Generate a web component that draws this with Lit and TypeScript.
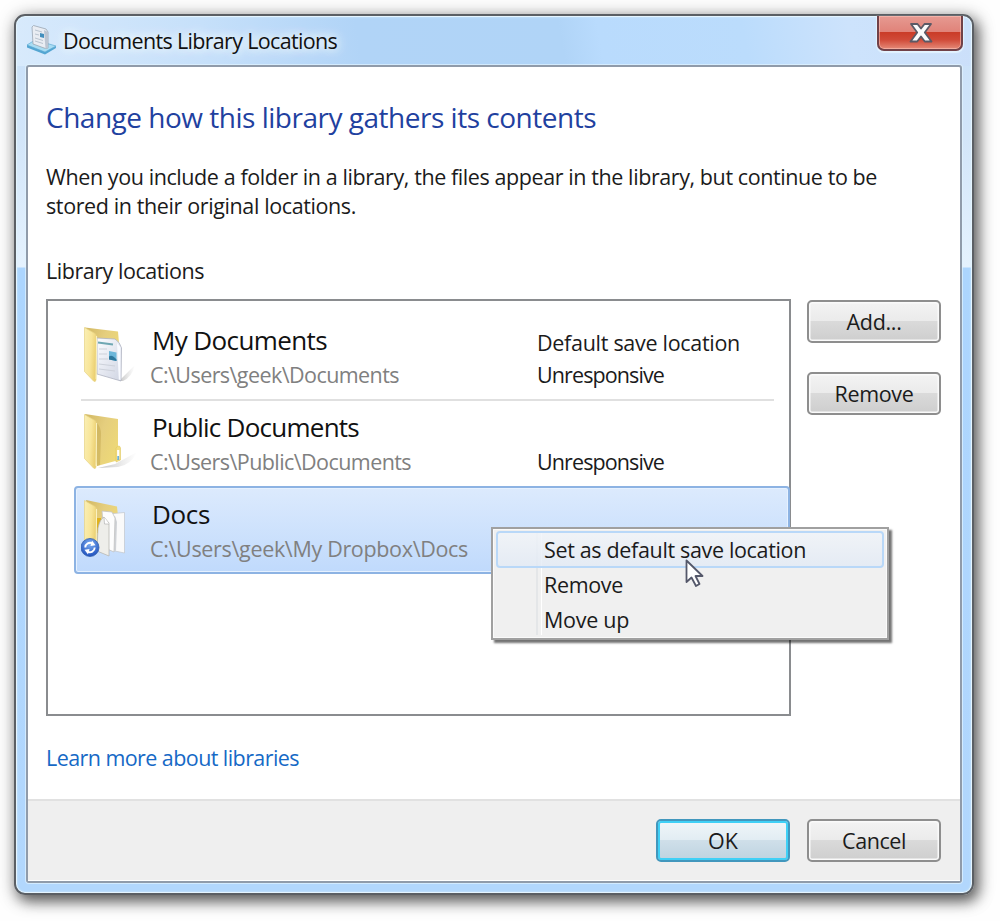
import { LitElement, html, css, svg } from "lit";
import { customElement, property } from "lit/decorators.js";

/** One line of text whose tracking is adjusted to span a given advance width. */
@customElement("fit-text")
class FitText extends LitElement {
  @property({ type: Number }) width = 0;
  @property() text = "";
  static styles = css`
    :host { display: block; white-space: pre; }
    .run { display: inline-block; }
  `;
  firstUpdated() {
    if (!this.text) return;
    const run = this.renderRoot.querySelector(".run") as HTMLElement;
    const natural = run.getBoundingClientRect().width;
    run.style.letterSpacing = `${(this.width - natural) / this.text.length}px`;
  }
  render() {
    return html`<span class="run">${this.text}</span>`;
  }
}

const defs = svg`
  <linearGradient id="flap" x1="0" y1="0" x2="1" y2="0.3">
    <stop offset="0" stop-color="#faefb4"/><stop offset=".6" stop-color="#f8e598"/><stop offset="1" stop-color="#ecd174"/>
  </linearGradient>
  <linearGradient id="back" x1="0" y1="0" x2="1" y2=".6">
    <stop offset="0" stop-color="#d2b862"/><stop offset=".5" stop-color="#e5ce7e"/><stop offset="1" stop-color="#eed977"/>
  </linearGradient>
  <linearGradient id="sheet" x1="0" y1="0" x2="1" y2="1">
    <stop offset="0" stop-color="#fbfcff"/><stop offset="1" stop-color="#d0d5e3"/>
  </linearGradient>
  <linearGradient id="cast" x1="0" y1="0" x2="1" y2="0">
    <stop offset="0" stop-color="#777" stop-opacity=".45"/><stop offset="1" stop-color="#999" stop-opacity="0"/>
  </linearGradient>
  <radialGradient id="orb" cx=".5" cy=".3" r=".7">
    <stop offset="0" stop-color="#7fb0f3"/><stop offset="1" stop-color="#1d4fbd"/>
  </radialGradient>`;

const flap = svg`<path d="M3.500 4.500 L14 10.500 Q15.500 11.500 15.500 14 L15 57 Q14.500 59.500 12.500 58 L3.500 48.500 Z" fill="url(#flap)" stroke="#e6d284" stroke-width=".7"/>
  <path d="M15.600 13 L15.100 56" stroke="#fbf3c4" stroke-width="1"/>`;

const icons: Record<string, unknown> = {
  documents: svg`
    <path d="M38 58 L54 42 Q51 54 42 58 Z" fill="url(#cast)"/>
    <path d="M4 4.500 L37 8.500 L38 20 L15 52 Z" fill="url(#back)"/>
    <path d="M16 15 L34 16 Q39 19 40.500 25 L40 58 L16 51 Z" fill="url(#sheet)" stroke="#aeb3c0" stroke-width=".8"/>
    <path d="M36 20 L39.500 24 L39.500 57 L37.800 56.500 Z" fill="#f8faff"/>
    <path d="M17 19.500 L32 21.500" stroke="#6fa7b3" stroke-width="2"/>
    <path d="M18 26 H26 M18 31 H26 M18 36 H27 M18 41 L34 43 M18 46 L34 48" stroke="#cdd1da" stroke-width="1"/>
    <path d="M28 28 L35.500 29.500 V38 L28 36.500 Z" fill="#6db7da"/>
    <path d="M28 33.500 Q31 31 35.500 36.500 V38 L28 36.500 Z" fill="#2d789d"/>${flap}`,
  folder: svg`
    <path d="M34 54 L56 42 Q50 55 37 57 L17 58 Z" fill="url(#cast)"/>
    <path d="M4 4 L37 9 L37 37 L39 38 L38 50 L16 56 Z" fill="url(#back)"/>
    <path d="M16 56 L15 12 Q20 17 20 24 L19 55 Z" fill="#c2a54c" opacity=".5"/>
    <path d="M35 38 Q38.500 34 39.500 38 L39.500 50 L35 52 Z" fill="#f2dd7d" stroke="#dfc762" stroke-width=".6"/>
    <path d="M37.200 40 V49" stroke="#fff" stroke-width="2.200"/><path d="M37.200 46 V50" stroke="#6fb1d5" stroke-width="1.800"/>${flap}`,
  docs: svg`
    <path d="M5 4 L36 10.500 L37 20 L16 50 Z" fill="url(#back)"/>
    <path d="M16 22 H20 V37 H16 Z" fill="#e0b21e"/>
    <path d="M27 18 L43.500 16.500 L43.500 57 L29 54 Z" fill="#fafafa" stroke="#c2c5cc" stroke-width=".7"/>
    <path d="M29 22 L34 20 L36 26 L35 55 L29 53 Z" fill="#cfd2d6"/>
    <path d="M21 15 L31 16 L34 22 L33 56 L24 52 Z" fill="#fdfdfd" stroke="#c3c3c3" stroke-width=".8"/>
    <path d="M17 32 Q19 23 23 21 L28 27 L28 60 L16 55 Z" fill="#eeeeea" stroke="#b8b8b2" stroke-width=".8"/>
    <path d="M23 21 L23.500 28 L28 28" fill="#fff" stroke="#aaa" stroke-width=".6"/>
    ${flap}
    <circle cx="9" cy="51.500" r="9" fill="url(#orb)" stroke="#315fae" stroke-width=".8"/>
    <path d="M4.300 51.500 A4.800 4.800 0 0 1 11.500 47.400" fill="none" stroke="#fff" stroke-width="1.900"/>
    <path d="M11 44.500 L14.500 49.200 L9.500 50 Z" fill="#fff"/>
    <path d="M13.700 51.500 A4.800 4.800 0 0 1 6.500 55.600" fill="none" stroke="#fff" stroke-width="1.900"/>
    <path d="M7 58.500 L3.500 53.800 L8.500 53 Z" fill="#fff"/>`,
};

const rows = [
  { icon: "documents", name: "My Documents", nw: 175, path: "C:\\Users\\geek\\Documents", pw: 249, status: [["Default save location", 203], ["Unresponsive", 127]], cls: "ruled" },
  { icon: "folder", name: "Public Documents", nw: 207, path: "C:\\Users\\Public\\Documents", pw: 261, status: [["", 0], ["Unresponsive", 127]], cls: "" },
  { icon: "docs", name: "Docs", nw: 58, path: "C:\\Users\\geek\\My Dropbox\\Docs", pw: 318, status: [], cls: "selected" },
];

const menu: [string, number][] = [["Set as default save location", 262], ["Remove", 79], ["Move up", 85]];

@customElement("app-root")
class AppRoot extends LitElement {
  static styles = css`
    :host {
      display: block; box-sizing: border-box; width: 1000px; height: 921px; padding: 14px; overflow: hidden;
      background: #fefefe; color: #1b1b1b; font: 21.5px/29px "Open Sans", "Noto Sans", sans-serif; position: relative;
    }
    * { box-sizing: border-box; }
    .window {
      width: 960px; height: 881px; border: 2px solid #5b5f64; border-radius: 11px; padding: 0 10px 10px 10px;
      display: flex; flex-direction: column;
      background:
        linear-gradient(80deg, #d8eafc 0, #c6e0fa 20%, #b1d4f7 36%, #b0d4f7 57%, #b9dbfd 61%, #bbdcfc 76%, #cde3fc 87%, #cbdffa 100%) 0 0 / 100% 50px no-repeat,
        linear-gradient(#c8e0f9 0, #d2e5f9 120px, #e5f2fe 251px, #acd5fe 252px, #b2d7fd 100%);
      box-shadow: inset 0 0 0 1px #e5f5ff, inset 0 0 2px 1px #d8f0fb, 4px 6px 14px 0 rgba(0,0,0,.55), 2px 3px 18px 2px rgba(0,0,0,.25);
    }
    .titlebar { display: flex; height: 49px; flex: none; }
    .appicon { width: 32px; height: 32px; margin: 8px 0 0 -1px; flex: none; }
    .title { color: #111; margin: 10px 0 0 6px; text-shadow: 0 0 8px #fff, 0 0 12px #e7f5ff, 0 0 15px #e7f5ff; }
    .close {
      margin-left: auto; margin-right: -1px; width: 86px; height: 35px; border: 2px solid #714148; border-top: 0;
      border-radius: 0 0 7px 7px; display: flex; justify-content: center; align-items: center;
      background: linear-gradient(#e69a92 0, #e08379 48%, #ca3c28 50%, #d04a38 72%, #e58a78 100%);
      box-shadow: inset 0 0 0 1px rgba(255,200,190,.55), 0 1px 1px 1px #e3f3ff;
    }
    .close svg { margin-left: 2px; }
    .client {
      flex: 1; border: 2px solid #909baa; border-radius: 3px; background: #fff; display: flex; flex-direction: column;
      box-shadow: 0 0 0 1px rgba(225,243,255,.7);
    }
    .body { height: 732px; padding: 32px 20px 0 18px; flex: none; }
    .heading { color: #1f419f; font-size: 28px; line-height: 36px; height: 36px; }
    .para { margin-top: 27px; }
    .label { margin-top: 36px; }
    .columns { display: flex; gap: 16px; margin-top: 14px; }
    .list { width: 745px; height: 417px; border: 2px solid #8a8c8f; background: #fff; padding: 12px 0 0 26px; }
    .row { display: flex; height: 87px; width: 716px; padding: 10px 0 0 7px; position: relative; }
    .row.ruled::after { content: ""; position: absolute; left: 7px; right: 16px; bottom: -1px; height: 2px; background: #e0e0e0; }
    .row.selected {
      height: 88px; margin-top: -1px; border: 2px solid #8db3e3; border-radius: 4px; padding: 8px 0 0 5px;
      background: linear-gradient(#dceafd, #c0dafc); box-shadow: inset 0 0 0 1px #e6f1ff;
    }
    .selected .names { padding-top: 1px; }
    .ficon { width: 60px; height: 66px; flex: none; }
    .names { width: 385px; margin-left: 11px; }
    .name { font-size: 26px; line-height: 36px; height: 36px; color: #111; margin-top: -1px; }
    .path { color: #808080; line-height: 29px; margin: 2px 0 0 -2px; }
    .status { padding-top: 5px; }
    .status fit-text { height: 32px; }
    .side { display: flex; flex-direction: column; gap: 29px; padding-top: 1px; }
    .button {
      width: 134px; height: 43px; border: 2px solid #8e8e8e; border-radius: 5px; display: flex; justify-content: center; align-items: center;
      background: linear-gradient(#f3f3f3 0, #ebebeb 48%, #dadada 50%, #cecece 100%); box-shadow: inset 0 0 0 1.500px #fafafa;
    }
    .button.primary {
      border-color: #4297bd; background: linear-gradient(#f0f6f9 0, #e2edf3 48%, #cfdfe9 50%, #bed3e0 100%);
      box-shadow: inset 0 0 0 2px #3fd0f6;
    }
    .link { color: #1669c6; margin-top: 27px; }
    .footer { flex: 1; background: #efefef; border-top: 2px solid #e1e1e1; padding: 18px 19px 0; display: flex; justify-content: flex-end; gap: 17px; box-shadow: inset 0 -1px #fff; }
    .menu {
      position: absolute; left: 491px; top: 527px; width: 398px; height: 113px; background: #f0f0f0; border: 2px solid #a0a0a0;
      box-shadow: inset 0 0 0 1px #fafafa, 3px 3px 2px 0 rgba(0,0,0,.55); padding: 2px 3px;
    }
    .menu::before { content: ""; position: absolute; left: 43px; top: 3px; bottom: 3px; width: 3px; border-left: 2px solid #e4e6e8; border-right: 1px solid #fff; }
    .item { height: 35px; padding: 3px 0 0 48px; position: relative; }
    .item.hot {
      height: 37px; margin-bottom: -1px; border: 2px solid #b9d8f8; border-radius: 4px; padding: 2px 0 0 46px;
      background: linear-gradient(rgba(240,244,249,.8), rgba(226,234,245,.8));
    }
    .cursor { position: absolute; left: 684px; top: 558px; width: 22px; height: 31px; }
  `;

  render() {
    return html`
      <div class="window">
        <div class="titlebar">
          <svg class="appicon" viewBox="0 0 32 32">
            <path d="M2 21 L10 16 L31 22 L20 28 Z" fill="#a9ddf3" stroke="#6bb4d9" stroke-width=".8"/>
            <path d="M2 21 L20 28 L31 22 V24 L20 30.500 L2 23.500 Z" fill="#54a6d2"/>
            <path d="M7 3 L8.500 1.500 L21 5 L23 8 V24 L20.500 24.500 L8 20 Z" fill="#e9edf3" stroke="#9ba6b3" stroke-width=".8"/>
            <path d="M19 6 L23 8 V24 L20.500 24.500 Z" fill="#bcc5d2"/>
            <path d="M10 6 L17 8 M10 10 L14 11 M10 14 L18 16.500 M10 17 L18 19.500" stroke="#b9c4d0" stroke-width="1"/>
            <path d="M15 9 L19 10 V14 L15 13 Z" fill="#438fbd"/>
          </svg>
          <fit-text class="title" text="Documents Library Locations" width="274"></fit-text>
          <div class="close">
            <svg width="26" height="24" viewBox="0 0 26 24">
              <path d="M3 3 H9.500 L13 7.500 L16.500 3 H23 L16.800 11.500 L23.500 20.500 H16.800 L13 15.500 L9.200 20.500 H2.500 L9.200 11.500 Z" fill="#fbfbfb" stroke="#5b5965" stroke-width="1.800" stroke-linejoin="round"/>
            </svg>
          </div>
        </div>
        <div class="client">
          <div class="body">
            <fit-text class="heading" text="Change how this library gathers its contents" width="550"></fit-text>
            <div class="para">
              <fit-text text="When you include a folder in a library, the files appear in the library, but continue to be" width="831"></fit-text>
              <fit-text text="stored in their original locations." width="310"></fit-text>
            </div>
            <fit-text class="label" text="Library locations" width="158"></fit-text>
            <div class="columns">
              <div class="list">
                ${rows.map((r) => html`
                  <div class="row ${r.cls}">
                    <svg class="ficon" viewBox="0 0 60 66"><defs>${defs}</defs>${icons[r.icon]}</svg>
                    <div class="names">
                      <fit-text class="name" text=${r.name} width=${r.nw}></fit-text>
                      <fit-text class="path" text=${r.path} width=${r.pw}></fit-text>
                    </div>
                    <div class="status">
                      ${r.status.map(([t, w]) => html`<fit-text text=${t} width=${w}></fit-text>`)}
                    </div>
                  </div>`)}
              </div>
              <div class="side">
                <div class="button"><fit-text text="Add..." width="55"></fit-text></div>
                <div class="button"><fit-text text="Remove" width="79"></fit-text></div>
              </div>
            </div>
            <fit-text class="link" text="Learn more about libraries" width="253"></fit-text>
          </div>
          <div class="footer">
            <div class="button primary"><fit-text text="OK" width="30"></fit-text></div>
            <div class="button"><fit-text text="Cancel" width="64"></fit-text></div>
          </div>
        </div>
      </div>
      <div class="menu">
        ${menu.map(([t, w], i) => html`<div class="item ${i === 0 ? "hot" : ""}"><fit-text text=${t} width=${w}></fit-text></div>`)}
      </div>
      <svg class="cursor" viewBox="0 0 22 31">
        <path d="M2.500 2.500 V24 L7.500 19.500 L12 28 L15.500 26 L11.500 18 H18.500 Z" fill="#fff" stroke="#54586a" stroke-width="1.800" stroke-linejoin="round"/>
      </svg>
    `;
  }
}
